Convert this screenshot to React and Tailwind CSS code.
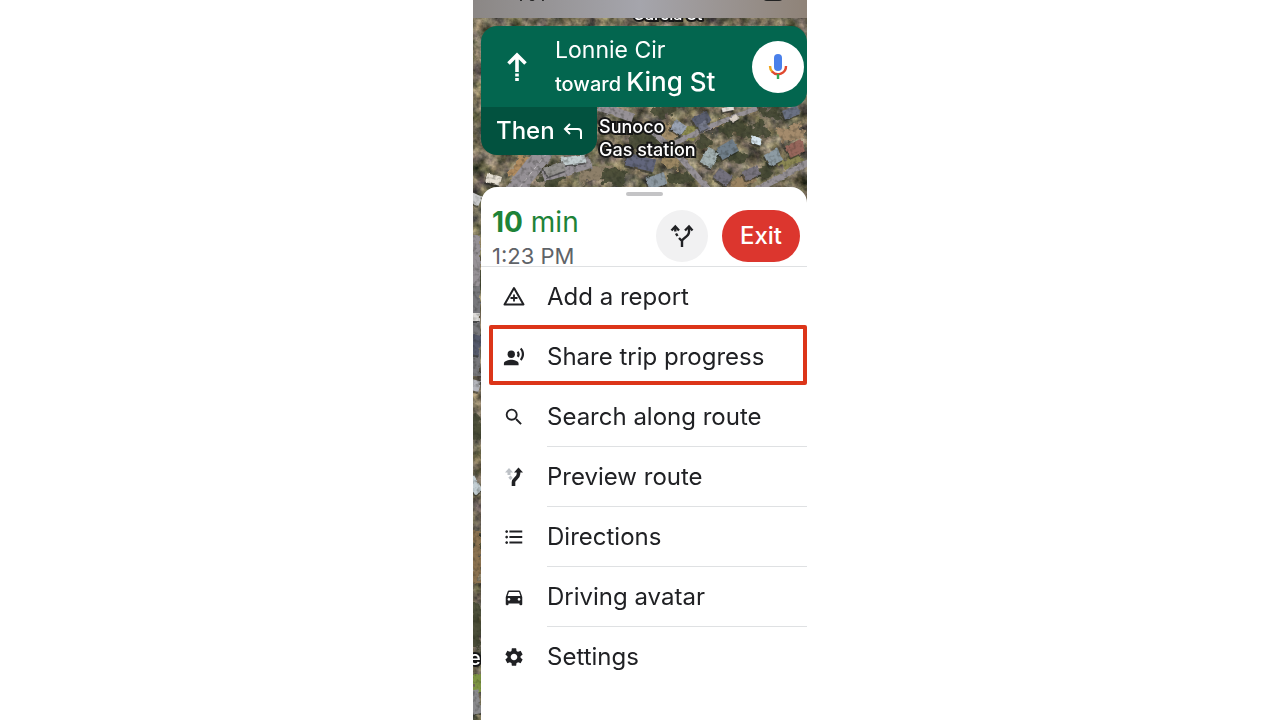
import React from "react";
import {
    MdRecordVoiceOver,
    MdSearch,
    MdFormatListBulleted,
    MdDirectionsCar,
    MdSettings,
} from "react-icons/md";

const houses = [
    { x: 199, y: 122, w: 13, h: 11, r: 35, fill: "#9aa3b3" },
    { x: 220, y: 114, w: 17, h: 11, r: -28, fill: "#5b5f70" },
    { x: 225, y: 122, w: 10, h: 8, r: -28, fill: "#75798a" },
    { x: 153, y: 156, w: 29, h: 13, r: 14, fill: "#62667c" },
    { x: 174, y: 175, w: 19, h: 12, r: -20, fill: "#8b97a0" },
    { x: 230, y: 149, w: 13, h: 17, r: 28, fill: "#a4b1b2" },
    { x: 245, y: 143, w: 19, h: 13, r: -30, fill: "#717f8b" },
    { x: 270, y: 168, w: 17, h: 10, r: -25, fill: "#77737d" },
    { x: 278, y: 137, w: 11, h: 7, r: 20, fill: "#d7e6ee" },
    { x: 293, y: 151, w: 15, h: 13, r: -28, fill: "#8d9ba3" },
    { x: 314, y: 142, w: 17, h: 13, r: -25, fill: "#96665b" },
    { x: 242, y: 171, w: 16, h: 12, r: 35, fill: "#74717d" },
    { x: 310, y: 108, w: 16, h: 9, r: -20, fill: "#6a7183" },
    { x: 249, y: 107, w: 12, h: 4, r: -12, fill: "#e2ddd8" },
    { x: 257, y: 116, w: 9, h: 5, r: -30, fill: "#d9d0c6" },
    { x: 88, y: 156, w: 25, h: 8, r: -8, fill: "#c3ced0" },
    { x: 13, y: 175, w: 15, h: 9, r: 15, fill: "#e6dfd2" },
    { x: 72, y: 164, w: 20, h: 10, r: -20, fill: "#94928f" },
    { x: -4, y: 194, w: 12, h: 10, r: 25, fill: "#c9cacb" },
    { x: -2, y: 313, w: 9, h: 8, r: 0, fill: "#dedcda" },
    { x: -2, y: 335, w: 9, h: 20, r: 10, fill: "#54596b" },
    { x: -3, y: 380, w: 10, h: 11, r: 15, fill: "#b4b5bb" },
    { x: -3, y: 476, w: 9, h: 18, r: -30, fill: "#c3ced3" },
    { x: -2, y: 690, w: 9, h: 24, r: -12, fill: "#8a8a8d" },
];

const trees = [
    { x: 172, y: 138, rx: 18, ry: 12 },
    { x: 192, y: 111, rx: 14, ry: 6 },
    { x: 142, y: 177, rx: 13, ry: 9 },
    { x: 230, y: 142, rx: 8, ry: 5 },
    { x: 78, y: 179, rx: 13, ry: 7 },
    { x: 261, y: 128, rx: 13, ry: 8 },
    { x: 285, y: 131, rx: 13, ry: 8 },
    { x: 298, y: 113, rx: 11, ry: 6 },
    { x: 265, y: 157, rx: 10, ry: 7 },
    { x: 206, y: 178, rx: 12, ry: 7 },
    { x: 290, y: 172, rx: 10, ry: 6 },
    { x: 3, y: 278, rx: 6, ry: 14 },
    { x: 3, y: 428, rx: 6, ry: 13 },
    { x: 3, y: 625, rx: 6, ry: 24 },
];

const lots = [
    { x: 186, y: 126, w: 16, h: 12, r: 35, fill: "#a38d6a" },
    { x: 210, y: 128, w: 18, h: 9, r: -28, fill: "#8f8d52" },
    { x: 236, y: 121, w: 16, h: 8, r: -28, fill: "#b09673" },
    { x: 188, y: 154, w: 20, h: 12, r: 30, fill: "#9b8763" },
    { x: 308, y: 156, w: 20, h: 10, r: -24, fill: "#8a8653" },
    { x: 306, y: 127, w: 24, h: 12, r: -24, fill: "#a48b6c" },
    { x: 258, y: 178, w: 22, h: 8, r: -20, fill: "#9a8361" },
    { x: 34, y: 162, w: 26, h: 10, r: -55, fill: "#b08c60" },
    { x: 106, y: 168, w: 34, h: 10, r: -20, fill: "#8d7f69" },
    { x: -2, y: 530, w: 10, h: 52, r: 0, fill: "#8b7250" },
    { x: -2, y: 674, w: 10, h: 18, r: 0, fill: "#7d9442" },
];

const block = (b, i) => (
    <rect
        key={i}
        x={b.x}
        y={b.y}
        width={b.w}
        height={b.h}
        fill={b.fill}
        transform={`rotate(${b.r} ${b.x + b.w / 2} ${b.y + b.h / 2})`}
    />
);

const SatelliteMap = () => (
    <svg
        className="absolute inset-0 w-full h-full"
        viewBox="0 0 334 720"
        preserveAspectRatio="xMidYMin slice"
        aria-hidden="true"
    >
        <defs>
            <filter id="ground" x="0" y="0" width="100%" height="100%" colorInterpolationFilters="sRGB">
                <feTurbulence type="fractalNoise" baseFrequency="0.08" numOctaves="4" seed="7" />
                <feColorMatrix
                    values="0.9 0 0 0 0.01
                            0.8 0.08 0 0 -0.01
                            0.65 0 0.15 0 -0.05
                            0 0 0 0 1"
                />
            </filter>
            <filter id="grain" x="0" y="0" width="100%" height="100%" colorInterpolationFilters="sRGB">
                <feTurbulence type="fractalNoise" baseFrequency="0.25" numOctaves="3" seed="3" />
                <feColorMatrix
                    values="0 0 0 0 0.12
                            0 0 0 0 0.13
                            0 0 0 0 0.1
                            3 0 0 0 -1.4"
                />
            </filter>
            <filter id="rough" x="-5%" y="-5%" width="110%" height="110%" colorInterpolationFilters="sRGB">
                <feTurbulence type="fractalNoise" baseFrequency="0.12" numOctaves="3" seed="11" />
                <feDisplacementMap in="SourceGraphic" scale="14" xChannelSelector="R" yChannelSelector="G" />
                <feGaussianBlur stdDeviation="0.7" />
            </filter>
            <filter id="worn" x="-5%" y="-5%" width="110%" height="110%" colorInterpolationFilters="sRGB">
                <feTurbulence type="fractalNoise" baseFrequency="0.15" numOctaves="2" seed="5" />
                <feDisplacementMap in="SourceGraphic" scale="3" xChannelSelector="R" yChannelSelector="G" />
            </filter>
        </defs>
        <rect width="334" height="720" filter="url(#ground)" />
        <g filter="url(#rough)">
            {lots.map(block)}
            {trees.map((t, i) => (
                <ellipse key={i} cx={t.x} cy={t.y} rx={t.rx} ry={t.ry} fill="#434832" opacity="0.85" />
            ))}
        </g>
        <g filter="url(#worn)">
            <g fill="none" stroke="#969196">
                <path d="M40 192 L68 156 L112 100" strokeWidth="18" />
                <path d="M70 176 L118 162" strokeWidth="12" />
                <path d="M126 106 L160 118" strokeWidth="9" />
                <path d="M176 128 L206 156 L236 190" strokeWidth="6" />
                <path d="M200 144 L238 126 L284 108" strokeWidth="5" />
                <path d="M280 192 L336 162" strokeWidth="6" />
                <path d="M3 236 V286" strokeWidth="8" />
                <path d="M3 286 V376" strokeWidth="8" stroke="#77777b" />
            </g>
            <path d="M46 188 L78 148" stroke="#c4c0c1" strokeWidth="1" strokeDasharray="5 3" />
            {/* dropped shadows under the roofs */}
            <g transform="translate(-1 2)" opacity="0.55">
                {houses.map((h, i) => block({ ...h, fill: "#1f211f" }, i))}
            </g>
            {houses.map(block)}
        </g>
        <rect width="334" height="720" filter="url(#grain)" opacity="0.3" />
    </svg>
);

const RouteForkIcon = () => (
    <svg className="size-6" viewBox="0 0 24 24" fill="none" stroke="#202124" strokeWidth="2.4" aria-hidden="true">
        <path d="M12 23v-6c0-3 7-4 7-9V3" />
        <path d="M11.500 16.500L9 14M7.500 12L6 9.500M5.300 7.500V3" />
        <path d="M1.500 6.500L5.300 2.500L9 6.500M15 6.500L19 2.500L22.500 6.500" />
    </svg>
);

const ReportIcon = () => (
    <svg className="size-6" viewBox="0 0 24 24" fill="none" stroke="currentColor" strokeWidth="2" aria-hidden="true">
        <path d="M12 3L21.500 19.500H2.500Z" strokeLinejoin="round" />
        <path d="M12 9.500v7M8.500 13h7" strokeWidth="1.800" />
    </svg>
);

const PreviewIcon = () => (
    <svg className="size-6" viewBox="0 0 24 24" fill="none" aria-hidden="true">
        <path d="M11.500 21v-4c0-3 5-4 5-8V6" stroke="#202124" strokeWidth="3.600" />
        <path d="M12 7.500L16.500 2.500L21 7.500Z" fill="#202124" />
        <path d="M3 7.500L7 3L11 7.500Z" fill="#bdc1c6" />
        <path d="M7 7v3M7.500 11.500l2 2.500" stroke="#bdc1c6" strokeWidth="3" />
    </svg>
);

const MicIcon = () => (
    <svg className="size-8" viewBox="0 0 32 32" fill="none" aria-hidden="true">
        <rect x="12" y="3" width="8" height="17" rx="4" fill="#4a80ea" />
        <path d="M8 15a8 8 0 0 0 2.500 6" stroke="#f0a51c" strokeWidth="2.400" />
        <path d="M10 20.500A8 8 0 0 0 24 15" stroke="#e0492f" strokeWidth="2.400" />
        <path d="M16 23v5" stroke="#34a853" strokeWidth="2.400" />
    </svg>
);

const menu = [
    { label: "Add a report", icon: <ReportIcon /> },
    { label: "Share trip progress", icon: <MdRecordVoiceOver className="size-[22px] mx-px" />, active: true },
    { label: "Search along route", icon: <MdSearch className="size-[22px] mx-px" /> },
    { label: "Preview route", icon: <PreviewIcon /> },
    { label: "Directions", icon: <MdFormatListBulleted className="size-[22px] mx-px" /> },
    { label: "Driving avatar", icon: <MdDirectionsCar className="size-[22px] mx-px" /> },
    { label: "Settings", icon: <MdSettings className="size-[22px] mx-px" /> },
];

const MapLabel = ({ className, children }) => (
    <span
        className={`absolute whitespace-nowrap text-white font-medium [-webkit-text-stroke:4px_#161616] [paint-order:stroke_fill] ${className}`}
    >
        {children}
    </span>
);

const StatusBar = () => (
    <div className="relative h-[18px] overflow-hidden bg-linear-to-r from-[#8b8785] via-[#a5a5ac] to-[#8f8378]">
        <div className="flex justify-between pl-11 pr-6 -mt-3 text-sm leading-4 font-semibold text-[#222]">
            <span>1:04</span>
            <span className="w-5 h-[13px] rounded-sm bg-[#222]" />
        </div>
    </div>
);

const DirectionBanner = () => (
    <header className="relative pl-2 pt-2">
        <div className="flex items-center h-[81px] pl-6 pr-[3px] rounded-t-2xl rounded-br-2xl bg-[#03664f] text-white">
            <svg className="w-6 h-8 shrink-0" viewBox="0 0 24 32" fill="none" stroke="#fff" strokeWidth="3.600" aria-hidden="true">
                <path d="M12 21V4M3.500 12.500L12 4L20.500 12.500" />
                <path d="M12 22.500v3M12 27v3" />
            </svg>
            <div className="flex-1 pl-[26px] whitespace-nowrap">
                <p className="text-[23px] leading-8">Lonnie Cir</p>
                <p className="text-xl leading-8 font-medium">
                    toward <span className="text-[26px]">King St</span>
                </p>
            </div>
            <button aria-label="Voice search" className="flex items-center justify-center size-[52px] shrink-0 rounded-full bg-white">
                <MicIcon />
            </button>
        </div>
        <div className="flex items-center gap-2 w-[116px] h-12 pl-[15px] rounded-b-2xl bg-[#02523f] text-2xl font-medium text-white">
            Then
            <svg className="w-5 h-5" viewBox="0 0 20 20" fill="none" stroke="#fff" strokeWidth="2" aria-hidden="true">
                <path d="M7 3L2 8L7 13M2 8H15Q18 8 18 11V18" />
            </svg>
        </div>
    </header>
);

const TripSheet = () => (
    <section className="relative flex-1 ml-2 rounded-t-2xl bg-white">
        <div className="h-20 border-b border-[#dfe1e3]">
            <div className="flex h-[13px] items-center justify-center">
                <span className="w-[37px] h-1 rounded-full bg-[#c4c4c6]" />
            </div>
            <div className="flex items-center pl-[11px] pr-[7px]">
                <div className="flex-1 pt-1 whitespace-nowrap">
                    <p className="text-[28px] leading-9 text-[#1e8338]">
                        <strong className="font-bold">10</strong> min
                    </p>
                    <p className="text-[22px] leading-8 text-[#5f6368]">1:23 PM</p>
                </div>
                <button aria-label="Route options" className="flex items-center justify-center size-[52px] mr-[14px] rounded-full bg-[#f1f1f2]">
                    <RouteForkIcon />
                </button>
                <button className="w-[78px] h-[52px] rounded-full bg-[#dc362e] text-2xl font-medium text-white">
                    Exit
                </button>
            </div>
        </div>
        <ul>
            {menu.map((item, i) => (
                <li key={item.label} className="relative">
                    <button className="flex items-center w-full h-[60px] pl-[21px] text-left text-2xl text-[#202124]">
                        {item.icon}
                        <span
                            className={`flex flex-1 items-center h-full ml-[21px] border-b ${
                                i > 1 && i < menu.length - 1 ? "border-[#dfe1e3]" : "border-transparent"
                            }`}
                        >
                            {item.label}
                        </span>
                    </button>
                    {item.active && (
                        <div className="absolute left-2 right-0 -top-0.5 bottom-0.5 rounded-xs border-4 border-[#dc3519] pointer-events-none" />
                    )}
                </li>
            ))}
        </ul>
    </section>
);

const App = () => {
    return (
        <main className="flex justify-center min-h-screen bg-white font-['Inter','Lato',sans-serif]">
            <div className="relative flex flex-col w-full max-w-[334px] overflow-hidden">
                <SatelliteMap />
                <MapLabel className="left-40 top-1 text-base leading-5">Garcia St</MapLabel>
                <MapLabel className="left-[126px] top-[115px] text-lg leading-[23px]">
                    Sunoco
                    <br />
                    Gas station
                </MapLabel>
                <MapLabel className="-left-1 top-[644px] text-xl">e</MapLabel>
                <StatusBar />
                <DirectionBanner />
                <div className="h-8" />
                <TripSheet />
            </div>
        </main>
    );
};

export default App;
